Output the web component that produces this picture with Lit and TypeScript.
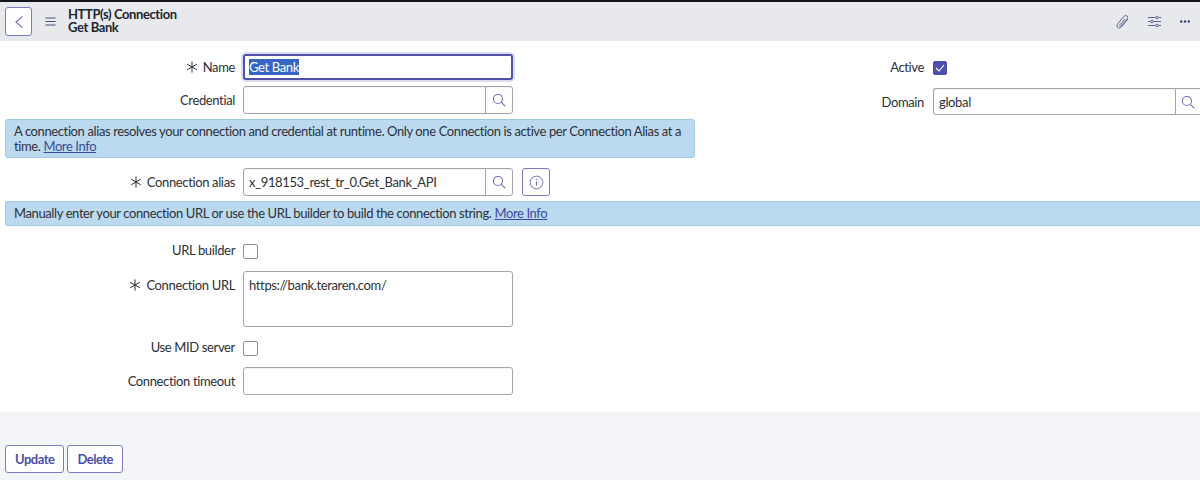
import { LitElement, html, css, svg } from "lit";
import { customElement } from "lit/decorators.js";

const searchIcon = svg`<svg viewBox="0 0 16 16" width="14" height="14" fill="none" stroke="#6d70b8" stroke-width="1.2"><circle cx="6.8" cy="6.8" r="5.2"/><path d="M10.6 10.6l4.2 4.2" stroke-linecap="round"/></svg>`;

const star = svg`<svg viewBox="0 0 12 12" width="12" height="12" fill="none" stroke="#2e3038" stroke-width="1" stroke-linecap="round"><path d="M6 .8v10.4M1.5 3.4l9 5.2M1.5 8.6l9-5.2"/></svg>`;

@customElement("app-root")
export class AppRoot extends LitElement {
  static styles = css`
    :host {
      display: block;
      width: 1200px;
      height: 480px;
      overflow: hidden;
      background: #f4f5f9;
      font-family: Lato, "Liberation Sans", sans-serif;
      font-size: 13px;
      letter-spacing: -0.36px;
      color: #2e3038;
    }
    .header {
      height: 39px;
      box-sizing: content-box;
      border-top: 2px solid #14161c;
      background: #e7e9ed;
      display: flex;
      align-items: center;
      padding: 0 10px 0 5px;
    }
    .back {
      width: 27px;
      height: 29px;
      box-sizing: border-box;
      border: 1px solid #7b7cc0;
      border-radius: 3px;
      background: #fff;
      display: flex;
      align-items: center;
      justify-content: center;
    }
    .menu {
      margin-left: 13px;
      display: flex;
    }
    .title {
      margin-left: 12px;
      font-weight: 700;
      font-size: 13px;
      line-height: 13px;
      letter-spacing: -0.4px;
      color: #23252d;
      margin-top: -1px;
    }
    .tools {
      margin-left: auto;
      display: flex;
      align-items: center;
      gap: 19px;
    }
    .form {
      height: 371px;
      box-sizing: border-box;
      background: #fff;
      padding-top: 13px;
    }
    .top {
      display: flex;
      justify-content: space-between;
    }
    .row {
      display: flex;
      align-items: flex-start;
    }
    .label {
      width: 235px;
      height: 28px;
      margin-right: 8px;
      display: flex;
      justify-content: flex-end;
      align-items: center;
      gap: 5px;
      white-space: nowrap;
    }
    .row.name .label {
      height: 26px;
    }
    .row.tick .label {
      height: 24px;
    }
    .side {
      display: grid;
      grid-template-columns: auto 267px;
      column-gap: 9px;
      grid-template-rows: 26px 27px;
      row-gap: 8px;
      align-items: center;
    }
    .side > span {
      justify-self: end;
    }
    .field {
      width: 270px;
      height: 28px;
      box-sizing: border-box;
      border: 1px solid #a3a5ac;
      border-radius: 3px;
      background: #fff;
      box-shadow: inset 0 1px 1px rgba(0, 0, 0, 0.05);
      display: flex;
      align-items: center;
    }
    .field.wide {
      width: 267px;
      height: 27px;
      border-right: 0;
      border-radius: 3px 0 0 3px;
    }
    .field.wide .btn {
      width: 25px;
    }
    .field .value {
      flex: 1;
      padding-left: 5px;
      white-space: nowrap;
      overflow: hidden;
    }
    .field .btn {
      width: 27px;
      height: 100%;
      box-sizing: border-box;
      border-left: 1px solid #a3a5ac;
      display: flex;
      align-items: center;
      justify-content: center;
    }
    .field.focus {
      height: 26px;
      border: 2px solid #4f52a8;
      box-shadow: 0 0 0 2px #dcdcf2;
    }
    .focus .value {
      padding-left: 4px;
    }
    .selected {
      background: #3566c4;
      color: #fff;
    }
    .info-btn {
      margin-left: 9px;
      width: 28px;
      height: 28px;
      box-sizing: border-box;
      border: 1px solid #7b7cc0;
      border-radius: 3px;
      display: flex;
      align-items: center;
      justify-content: center;
    }
    .note {
      background: #bbdaf0;
      border: 1px solid #9fc8e4;
      box-sizing: border-box;
      line-height: 15px;
      padding: 4px 8px;
      letter-spacing: -0.39px;
      white-space: nowrap;
    }
    .note a {
      color: #3c4a9c;
      text-decoration: underline;
    }
    .note.first {
      width: 690px;
      height: 39px;
      margin: 4px 0 0 5px;
      border-radius: 3px;
    }
    .note.second {
      height: 25px;
      margin: 5px 0 0 5px;
      border-right: 0;
      border-radius: 3px 0 0 3px;
    }
    .check {
      width: 15px;
      height: 15px;
      box-sizing: border-box;
      border: 1px solid #8c8e96;
      border-radius: 2px;
      background: #fff;
      margin-top: 6px;
    }
    .check.on {
      width: 14px;
      height: 14px;
      margin-top: 1px;
      background: #4c4fad;
      border-color: #4c4fad;
      display: flex;
      align-items: center;
      justify-content: center;
    }
    .area {
      width: 270px;
      height: 56px;
      box-sizing: border-box;
      border: 1px solid #a3a5ac;
      border-radius: 3px;
      padding: 5px;
      line-height: 16px;
    }
    .footer {
      display: flex;
      gap: 3px;
      padding: 33px 0 0 5px;
    }
    .footer button {
      height: 28px;
      box-sizing: border-box;
      border: 1px solid #7b7cc0;
      border-radius: 3px;
      background: #fff;
      color: #4c4fad;
      font: 700 13px Lato, "Liberation Sans", sans-serif;
      letter-spacing: -0.5px;
      padding: 0 9px;
    }
  `;

  private label(text: string, req = false) {
    return html`<div class="label">${req ? star : ""}<span>${text}</span></div>`;
  }

  render() {
    return html`
      <div class="header">
        <div class="back">
          <svg viewBox="0 0 12 14" width="12" height="14" fill="none" stroke="#6d70b8" stroke-width="1.1" stroke-linecap="round"><path d="M9.2 1.6L3 7l6.2 5.4"/></svg>
        </div>
        <div class="menu">
          <svg viewBox="0 0 11 9" width="11" height="9" stroke="#4a4c78" stroke-width="1"><path d="M.5 1h10M.5 4.5h10M.5 8h10"/></svg>
        </div>
        <div class="title">HTTP(s) Connection<br />Get Bank</div>
        <div class="tools">
          <svg viewBox="0 0 13 14" width="13" height="14" fill="none" stroke="#5f6190" stroke-width="1" stroke-linecap="round"><path d="M11.6 4.4L5.6 11.6c-1.2 1.4-2.8 1.8-3.9.9-1.1-.9-1-2.5.2-3.9L7.6 1.8c1-1.2 2.4-1.5 3.4-.8 1 .8.9 2.1-.1 3.3L5.4 10.7c-.5.6-1.1.8-1.5.4-.4-.3-.3-.9.2-1.5l4.6-5.4"/></svg>
          <svg viewBox="0 0 13 11" width="13" height="11" fill="none" stroke="#5f6190" stroke-width="1"><path d="M0 1.5h7.5M10.5 1.5h2.5M0 5.5h2.5M5.5 5.5h7.5M0 9.5h7.5M10.5 9.5h2.5"/><circle cx="9" cy="1.5" r="1.3"/><circle cx="4" cy="5.5" r="1.3"/><circle cx="9" cy="9.5" r="1.3"/></svg>
          <svg viewBox="0 0 10 3" width="10" height="3" fill="#3a3c78"><circle cx="1.2" cy="1.5" r="1.2"/><circle cx="5" cy="1.5" r="1.2"/><circle cx="8.8" cy="1.5" r="1.2"/></svg>
        </div>
      </div>

      <div class="form">
        <div class="top">
          <div>
            <div class="row name">
              ${this.label("Name", true)}
              <div class="field focus"><div class="value"><span class="selected">Get Bank</span></div></div>
            </div>
            <div class="row" style="margin-top:6px">
              ${this.label("Credential")}
              <div class="field"><div class="value"></div><div class="btn">${searchIcon}</div></div>
            </div>
          </div>
          <div class="side">
            <span>Active</span>
            <div class="check on">
              <svg viewBox="0 0 10 8" width="10" height="8" fill="none" stroke="#fff" stroke-width="1.1"><path d="M1 4l3 3 5-6"/></svg>
            </div>
            <span>Domain</span>
            <div class="field wide"><div class="value">global</div><div class="btn">${searchIcon}</div></div>
          </div>
        </div>

        <div class="note first">A connection alias resolves your connection and credential at runtime. Only one Connection is active per Connection Alias at a<br />time. <a>More Info</a></div>

        <div class="row" style="margin-top:10px">
          ${this.label("Connection alias", true)}
          <div class="field"><div class="value">x_918153_rest_tr_0.Get_Bank_API</div><div class="btn">${searchIcon}</div></div>
          <div class="info-btn">
            <svg viewBox="0 0 16 16" width="15" height="15" fill="none" stroke="#6d70b8" stroke-width="1"><circle cx="8" cy="8" r="6.8"/><path d="M8 7v4.4" stroke-width="1.3"/><path d="M8 4.2v1.3" stroke-width="1.3"/></svg>
          </div>
        </div>

        <div class="note second">Manually enter your connection URL or use the URL builder to build the connection string. <a>More Info</a></div>

        <div class="row tick" style="margin-top:12px">
          ${this.label("URL builder")}
          <div class="check"></div>
        </div>
        <div class="row" style="margin-top:9px">
          ${this.label("Connection URL", true)}
          <div class="area">https://bank.teraren.com/</div>
        </div>
        <div class="row tick" style="margin-top:8px">
          ${this.label("Use MID server")}
          <div class="check"></div>
        </div>
        <div class="row" style="margin-top:8px">
          ${this.label("Connection timeout")}
          <div class="field"></div>
        </div>
      </div>

      <div class="footer">
        <button>Update</button>
        <button>Delete</button>
      </div>
    `;
  }
}
